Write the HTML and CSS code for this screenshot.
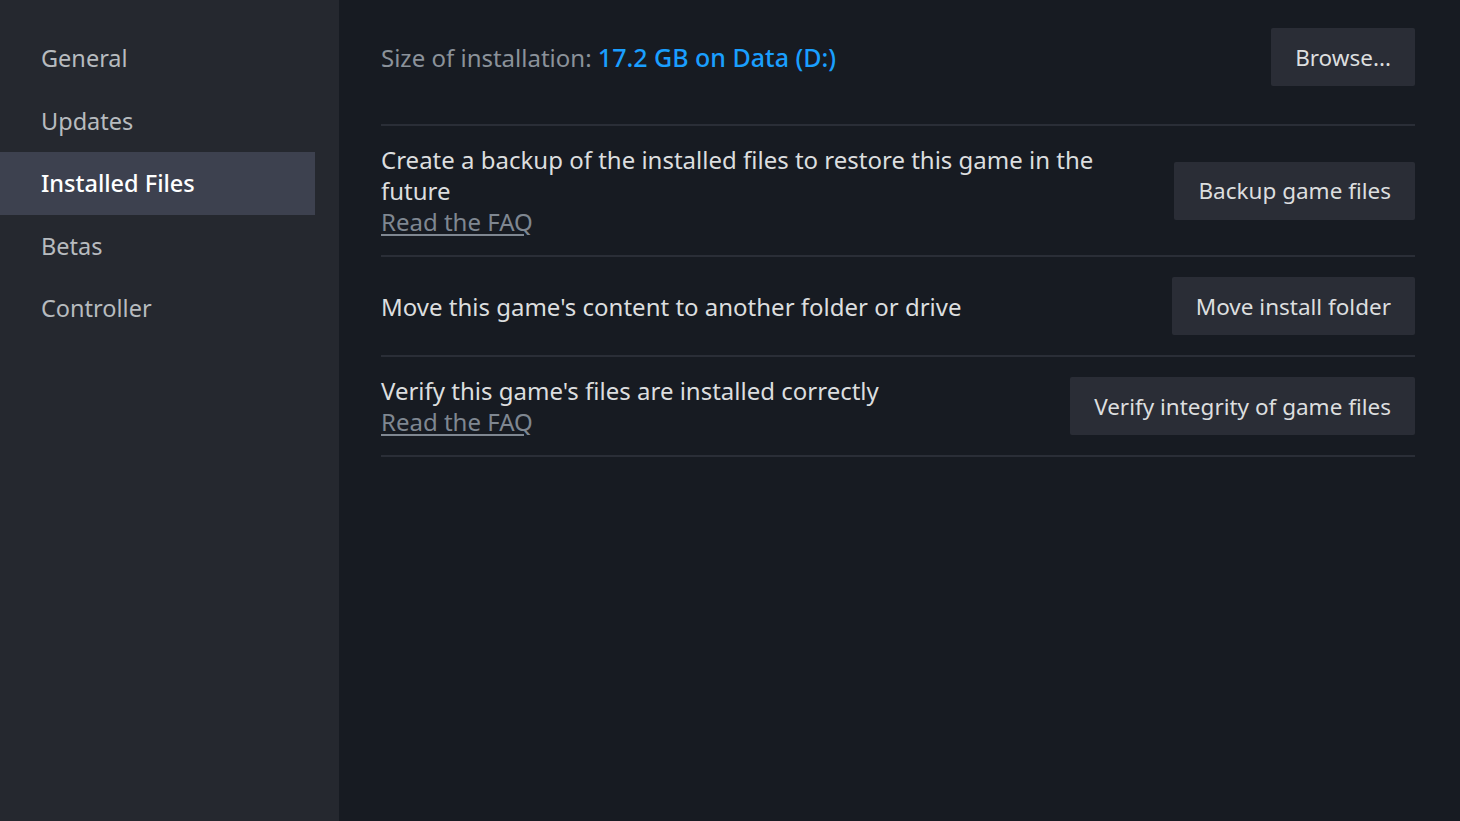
FILE: index.html
```html
<!DOCTYPE html>
<html lang="en">
<head>
<meta charset="utf-8">
<title>Installed Files</title>
<link rel="stylesheet" href="styles.css">
</head>
<body>
<div class="app">
  <nav class="sidebar">
    <div class="nav-item">General</div>
    <div class="nav-item">Updates</div>
    <div class="nav-item active">Installed Files</div>
    <div class="nav-item">Betas</div>
    <div class="nav-item">Controller</div>
  </nav>
  <main class="content">
    <div class="row row-size">
      <div class="label"><span class="muted">Size of installation:</span> <span class="accent">17.2 GB on Data (D:)</span></div>
      <button class="btn">Browse...</button>
    </div>
    <div class="row">
      <div class="label">Create a backup of the installed files to restore this game in the future<br><a class="faq" href="#">Read the FAQ</a></div>
      <button class="btn">Backup game files</button>
    </div>
    <div class="row">
      <div class="label">Move this game's content to another folder or drive</div>
      <button class="btn">Move install folder</button>
    </div>
    <div class="row">
      <div class="label">Verify this game's files are installed correctly<br><a class="faq" href="#">Read the FAQ</a></div>
      <button class="btn">Verify integrity of game files</button>
    </div>
  </main>
</div>
</body>
</html>
```
FILE: styles.css
```css
html, body {
  margin: 0;
  padding: 0;
  height: 100%;
}
body {
  background: #171b22;
  font-family: "Noto Sans", "Open Sans", sans-serif;
  color: #dcdedf;
}
.app {
  display: flex;
  height: 821px;
}
.sidebar {
  width: 315px;
  padding: 27px 24px 0 0;
  background: #25282f;
  flex-shrink: 0;
}
.nav-item {
  height: 62.5px;
  line-height: 62.5px;
  padding-left: 41px;
  font-size: 23.5px;
  color: #b7bbbf;
}
.nav-item.active {
  background: #3d414f;
  color: #ffffff;
  font-weight: 500;
}
.content {
  flex: 1;
  padding: 0 45px 0 42px;
}
.row {
  display: flex;
  align-items: center;
  justify-content: space-between;
  gap: 40px;
  padding: 18px 0;
  border-bottom: 2px solid #2a2e37;
  min-height: 62px;
}
.row-size {
  min-height: 58px;
  padding: 28px 0 38px;
}
.label {
  font-size: 24px;
  line-height: 31px;
  color: #dcdedf;
  max-width: 740px;
}
.muted {
  color: #8b929a;
}
.accent {
  color: #1a9fff;
  font-size: 25px;
  font-weight: 500;
}
.faq {
  color: #7f8791;
  text-decoration: underline;
  text-underline-offset: 3px;
}
.btn {
  flex-shrink: 0;
  height: 58px;
  padding: 0 24px;
  border: none;
  border-radius: 2px;
  background: #2a2d36;
  color: #dcdedf;
  font-family: "Noto Sans", "Open Sans", sans-serif;
  font-size: 22.5px;
}
```
